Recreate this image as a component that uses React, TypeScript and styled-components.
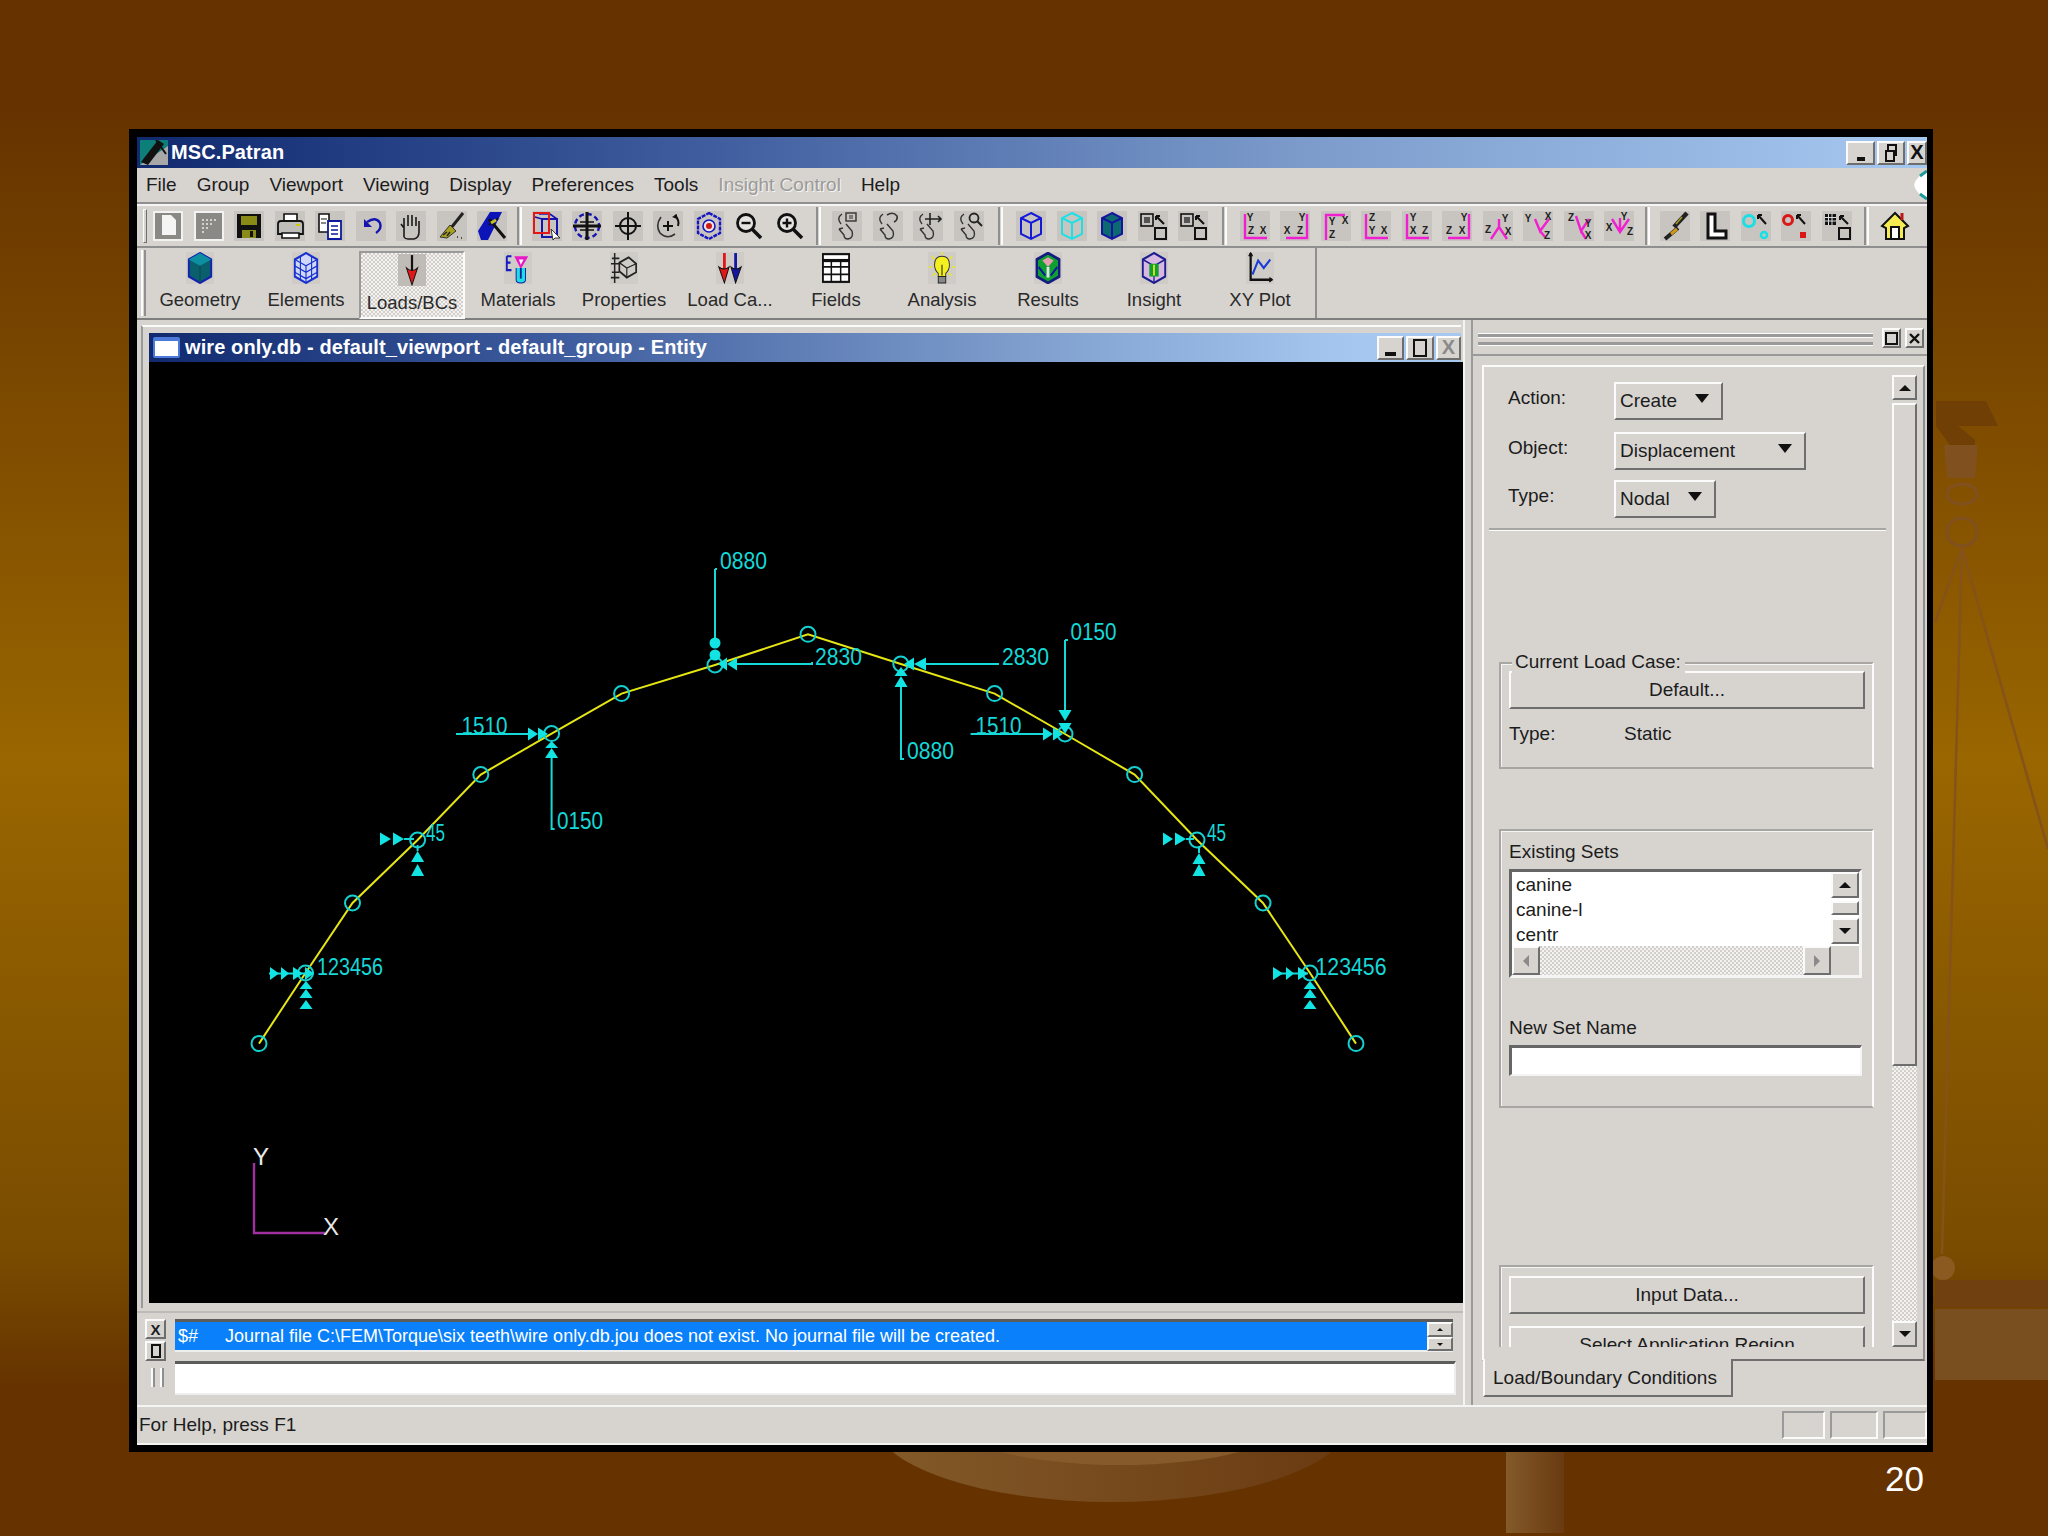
import React from 'react';
import styled, { createGlobalStyle } from 'styled-components';

const GlobalStyle = createGlobalStyle`
    html, body { margin: 0; padding: 0; }
    body { font-family: "Liberation Sans", Arial, sans-serif; color: #1c1c1c; }
`;

const FACE = '#d7d4d0';
const raised = `
    border-top: 2px solid #fbfbfb;
    border-left: 2px solid #fbfbfb;
    border-right: 2px solid #6e6e6e;
    border-bottom: 2px solid #6e6e6e;
    box-sizing: border-box;
    background: ${FACE};
`;
const dither = `repeating-conic-gradient(#f4f3f1 0 25%, #d2cfcb 0 50%) 0 0 / 4px 4px`;

const Page = styled.div`
    position: relative;
    width: 2048px;
    height: 1536px;
    overflow: hidden;
    padding: 129px 0 0 129px;
    box-sizing: border-box;
    background: linear-gradient(180deg, #663300 0, #663300 110px, #996600 760px, #7a4c00 1250px, #663300 1385px);
`;

const Backdrop = styled.svg`
    position: absolute;
    left: 0;
    top: 0;
`;

const Win = styled.div`
    position: relative;
    width: 1804px;
    box-sizing: border-box;
    border-style: solid;
    border-color: #000;
    border-width: 8px 6px 7px 8px;
    background: ${FACE};
    font-size: 19px;
`;

const PageNumber = styled.div`
    position: relative;
    width: 1795px;
    margin-top: 7px;
    text-align: right;
    color: #fff;
    font-size: 35px;
    line-height: 40px;
`;

const TitleBar = styled.div<{ $child?: boolean }>`
    display: flex;
    align-items: center;
    height: ${p => (p.$child ? 31 : 31)}px;
    box-sizing: border-box;
    padding-left: ${p => (p.$child ? 4 : 3)}px;
    background: linear-gradient(90deg, #10296f 0, #3c5a9c 30%, #7c9bcb 65%, #a6c8f0 ${p => (p.$child ? 92 : 100)}%, #a6c8f0 100%);
    color: #fff;
    font-weight: bold;
    font-size: 20px;
`;

const TitleText = styled.span<{ $ml: number }>`
    margin-left: ${p => p.$ml}px;
    flex: 1;
    white-space: nowrap;
    letter-spacing: 0.1px;
`;

const WinButton = styled.div<{ $w: number; $h: number; $dim?: boolean }>`
    ${raised}
    width: ${p => p.$w}px;
    height: ${p => p.$h}px;
    margin-left: 2px;
    display: flex;
    align-items: center;
    justify-content: center;
    overflow: hidden;
    color: ${p => (p.$dim ? '#8a8a8a' : '#111')};
    font-weight: bold;
    font-size: 20px;
    flex: none;
`;

const MenuBar = styled.div`
    position: relative;
    display: flex;
    align-items: center;
    gap: 20px;
    height: 36px;
    box-sizing: border-box;
    padding-left: 9px;
    border-bottom: 2px solid #8f8f8f;
`;

const MenuItem = styled.span<{ $off?: boolean }>`
    color: ${p => (p.$off ? '#9c9a97' : '#1c1c1c')};
    text-shadow: ${p => (p.$off ? '1px 1px 0 #f4f4f4' : 'none')};
    white-space: nowrap;
`;

const MdiCorner = styled.svg`
    margin-left: auto;
    flex: none;
`;

const ToolRow = styled.div`
    display: flex;
    align-items: center;
    height: 44px;
    box-sizing: border-box;
    padding-left: 6px;
    border-top: 2px solid #f4f4f4;
    border-bottom: 2px solid #8f8f8f;
`;

const Grip = styled.div`
    width: 4px;
    height: 34px;
    margin-right: 1px;
    ${raised}
    border-width: 1px;
    flex: none;
`;

const ToolCell = styled.div`
    width: 40.5px;
    height: 38px;
    display: flex;
    align-items: center;
    justify-content: center;
    flex: none;
`;

const ToolSep = styled.div<{ $w: number }>`
    width: ${p => p.$w}px;
    height: 38px;
    flex: none;
    display: flex;
    justify-content: center;
    &::before {
        content: '';
        width: 5px;
        box-sizing: border-box;
        border-left: 2px solid #8f8f8f;
        border-right: 2px solid #fbfbfb;
    }
`;

const BigRow = styled.div`
    display: flex;
    height: 72px;
    box-sizing: border-box;
    padding-left: 4px;
    border-bottom: 2px solid #7e7e7e;
`;

const BigGrip = styled.div`
    width: 5px;
    margin: 2px 1px 2px 0;
    border-left: 2px solid #fbfbfb;
    border-right: 2px solid #8f8f8f;
    box-sizing: border-box;
    flex: none;
`;

const BigBox = styled.div`
    display: flex;
    width: 1170px;
    box-sizing: border-box;
    border-right: 2px solid #8f8f8f;
    flex: none;
`;

const BigButton = styled.div<{ $on?: boolean }>`
    width: 106px;
    flex: none;
    display: flex;
    flex-direction: column;
    align-items: center;
    box-sizing: border-box;
    padding-top: ${p => (p.$on ? 1 : 4)}px;
    color: #2a2a2a;
    font-size: 18.5px;
    white-space: nowrap;
    height: ${p => (p.$on ? 68 : 70)}px;
    margin-top: ${p => (p.$on ? 3 : 0)}px;
    ${p =>
        p.$on
            ? `background: ${dither}; border: 2px solid #9a9a9a; border-right-color: #fbfbfb; border-bottom-color: #fbfbfb;`
            : ''}
`;

const BigLabel = styled.span<{ $on?: boolean }>`
    margin-top: ${p => (p.$on ? 6 : 5)}px;
    line-height: 22px;
`;

const Workspace = styled.div`
    display: flex;
    height: 1085px;
`;

const LeftCol = styled.div`
    width: 1326px;
    flex: none;
    display: flex;
    flex-direction: column;
`;

const ChildFrame = styled.div`
    margin: 5px 2px 0 4px;
    height: 983px;
    box-sizing: border-box;
    padding: 6px 0 5px 6px;
    display: flex;
    flex-direction: column;
    border-top: 2px solid #fbfbfb;
    border-left: 2px solid #9a9a9a;
`;

const Canvas = styled.svg`
    display: block;
    background: #000;
    flex: none;
`;

const CanvasLabel = styled.text`
    fill: #15d8d8;
    font-family: "Liberation Sans", Arial, sans-serif;
    font-size: 23px;
`;

const AxisLetter = styled.text`
    fill: #e8e8e8;
    font-family: "Liberation Sans", Arial, sans-serif;
    font-size: 24px;
`;

const JournalBar = styled.div`
    height: 97px;
    box-sizing: border-box;
    border-top: 2px solid #bdbbb8;
    margin-top: 3px;
    display: flex;
    padding: 6px 7px 0 8px;
    gap: 9px;
`;

const JournalTools = styled.div`
    width: 21px;
    display: flex;
    flex-direction: column;
    gap: 2px;
    flex: none;
`;

const JournalBtn = styled.div`
    ${raised}
    height: 20px;
    display: flex;
    align-items: center;
    justify-content: center;
    font-size: 15px;
    font-weight: bold;
`;

const JournalGrip = styled.div`
    width: 9px;
    height: 19px;
    margin: 5px 0 0 6px;
    border-left: 2px solid #fbfbfb;
    border-right: 2px solid #8f8f8f;
    box-shadow: inset 2px 0 0 #8f8f8f, inset -2px 0 0 #fbfbfb;
`;

const JournalMain = styled.div`
    flex: 1;
    display: flex;
    flex-direction: column;
`;

const JournalLine = styled.div`
    display: flex;
    height: 33px;
    margin-right: 3px;
    background: #0a80fa;
    border-top: 3px solid #5c5c5c;
    border-bottom: 2px solid #eee;
    box-sizing: border-box;
    color: #fff;
    font-size: 18px;
    align-items: center;
    white-space: pre;
`;

const JournalTag = styled.span`
    width: 50px;
    padding-left: 3px;
    box-sizing: border-box;
    flex: none;
`;

const JournalMsg = styled.span`
    flex: 1;
`;

const JournalSpin = styled.div`
    width: 26px;
    flex: none;
    display: flex;
    flex-direction: column;
    height: 100%;
`;

const CommandInput = styled.div`
    height: 34px;
    margin-top: 9px;
    background: #fff;
    box-sizing: border-box;
    border-top: 3px solid #5c5c5c;
    border-bottom: 2px solid #eee;
    border-right: 2px solid #eee;
`;

const PanelShell = styled.div`
    flex: 1;
    padding-left: 6px;
    border-left: 2px solid #f4f4f4;
    display: flex;
`;

const PanelInner = styled.div`
    flex: 1;
    border-left: 2px solid #9a9a9a;
    display: flex;
    flex-direction: column;
`;

const PanelHeader = styled.div`
    display: flex;
    align-items: center;
    height: 36px;
    flex: none;
    box-sizing: border-box;
    padding-left: 5px;
    border-bottom: 2px solid #9a9a9a;
`;

const PanelGrip = styled.div`
    width: 395px;
    height: 11px;
    margin-right: 9px;
    margin-top: 4px;
    box-sizing: border-box;
    border-top: 3px solid #9a9a9a;
    border-bottom: 3px solid #9a9a9a;
    box-shadow: inset 0 1px 0 #fbfbfb, 0 -1px 0 #fbfbfb, 0 1px 0 #fbfbfb;
`;

const PanelBtn = styled.div<{ $ml?: number }>`
    ${raised}
    width: 19px;
    height: 20px;
    margin-left: ${p => p.$ml ?? 0}px;
    margin-top: 2px;
    display: flex;
    align-items: center;
    justify-content: center;
    font-weight: bold;
    font-size: 15px;
`;

const FormFrame = styled.div`
    margin: 9px 2px 0 9px;
    height: 996px;
    flex: none;
    box-sizing: border-box;
    display: flex;
    border-top: 2px solid #fbfbfb;
    border-left: 2px solid #fbfbfb;
    border-right: 2px solid #8f8f8f;
    border-bottom: 2px solid #6e6e6e;
`;

const FormBody = styled.div`
    width: 408px;
    height: 980px;
    overflow: hidden;
    flex: none;
`;

const FieldRow = styled.div<{ $mt: number }>`
    display: flex;
    align-items: center;
    margin-top: ${p => p.$mt}px;
    padding-left: 24px;
`;

const FieldLabel = styled.span`
    width: 106px;
    flex: none;
    margin-bottom: 6px;
`;

const OptionMenu = styled.div<{ $w: number }>`
    ${raised}
    width: ${p => p.$w}px;
    height: 38px;
    display: flex;
    align-items: center;
    justify-content: space-between;
    padding: 0 12px 0 4px;
    line-height: 38px;
`;

const Caret = styled.i<{ $up?: boolean }>`
    width: 0;
    height: 0;
    display: block;
    flex: none;
    margin-bottom: 6px;
    border-left: 7px solid transparent;
    border-right: 7px solid transparent;
    border-top: 9px solid #111;
`;

const Rule = styled.div`
    margin: 10px 6px 0 5px;
    height: 2px;
    background: #a8a6a3;
    box-shadow: 0 1px 0 #fbfbfb;
`;

const Group = styled.div<{ $mt: number; $h: number }>`
    position: relative;
    width: 375px;
    height: ${p => p.$h}px;
    margin: ${p => p.$mt}px 0 0 15px;
    box-sizing: border-box;
    padding: 0 8px;
    border: 2px solid #a8a6a3;
    border-right-color: #fbfbfb;
    border-bottom-color: #a8a6a3;
    box-shadow: inset 1px 1px 0 #f4f4f4;
`;

const Legend = styled.span`
    position: absolute;
    left: 11px;
    top: -13px;
    padding: 0 4px 0 3px;
    background: ${FACE};
    line-height: 22px;
`;

const PushButton = styled.div<{ $mt: number }>`
    ${raised}
    width: 356px;
    height: 38px;
    margin-top: ${p => p.$mt}px;
    text-align: center;
    line-height: 34px;
`;

const StaticRow = styled.div`
    display: flex;
    margin-top: 14px;
    line-height: 22px;
`;

const StaticKey = styled.span`
    width: 115px;
`;

const GroupText = styled.div<{ $mt: number }>`
    margin-top: ${p => p.$mt}px;
    line-height: 22px;
`;

const ListBox = styled.div`
    width: 353px;
    height: 109px;
    margin-top: 6px;
    box-sizing: border-box;
    border-top: 3px solid #666;
    border-left: 3px solid #666;
    border-right: 3px solid #f4f4f4;
    border-bottom: 3px solid #f4f4f4;
    display: grid;
    grid-template-columns: 319px 28px;
    grid-template-rows: 74px 29px;
`;

const ListItems = styled.div`
    background: #fff;
    padding-left: 4px;
    line-height: 25px;
    overflow: hidden;
`;

const ListVScroll = styled.div`
    display: flex;
    flex-direction: column;
    gap: 3px;
    background: #fff;
`;

const ScrollBtn = styled.div<{ $h: number; $w?: number }>`
    ${raised}
    height: ${p => p.$h}px;
    width: ${p => (p.$w ? `${p.$w}px` : 'auto')};
    flex: none;
    display: flex;
    align-items: center;
    justify-content: center;
`;

const ListHScroll = styled.div`
    display: flex;
    justify-content: space-between;
    background: ${dither};
`;

const ArrowGlyph = styled.i<{ $dir: 'up' | 'down' | 'left' | 'right'; $size?: number; $color?: string }>`
    display: block;
    width: 0;
    height: 0;
    ${p => {
        const s = p.$size ?? 6;
        const c = p.$color ?? '#111';
        if (p.$dir === 'up') return `border-left: ${s}px solid transparent; border-right: ${s}px solid transparent; border-bottom: ${s}px solid ${c};`;
        if (p.$dir === 'down') return `border-left: ${s}px solid transparent; border-right: ${s}px solid transparent; border-top: ${s}px solid ${c};`;
        if (p.$dir === 'left') return `border-top: ${s}px solid transparent; border-bottom: ${s}px solid transparent; border-right: ${s}px solid ${c};`;
        return `border-top: ${s}px solid transparent; border-bottom: ${s}px solid transparent; border-left: ${s}px solid ${c};`;
    }}
`;

const TextField = styled.div`
    width: 353px;
    height: 31px;
    margin-top: 6px;
    background: #fff;
    box-sizing: border-box;
    border-top: 3px solid #666;
    border-left: 3px solid #666;
    border-right: 2px solid #f4f4f4;
    border-bottom: 2px solid #f4f4f4;
`;

const FormScroll = styled.div`
    width: 25px;
    margin: 8px 0 0 0;
    flex: none;
    display: flex;
    flex-direction: column;
    height: 972px;
`;

const ScrollThumb = styled.div`
    ${raised}
    height: 663px;
    margin-top: 3px;
    flex: none;
`;

const ScrollTrack = styled.div`
    flex: 1;
    background: ${dither};
`;

const TabRow = styled.div`
    flex: 1;
    padding-left: 10px;
`;

const Tab = styled.div`
    position: relative;
    width: 250px;
    height: 38px;
    margin-top: -2px;
    box-sizing: border-box;
    background: ${FACE};
    border-left: 2px solid #fbfbfb;
    border-right: 2px solid #6e6e6e;
    border-bottom: 2px solid #6e6e6e;
    padding-left: 8px;
    line-height: 38px;
    white-space: nowrap;
`;

const StatusBar = styled.div`
    height: 40px;
    box-sizing: border-box;
    display: flex;
    align-items: center;
    padding-left: 2px;
    border-top: 2px solid #f4f4f4;
    border-bottom: 2px solid #f4f4f4;
`;

const StatusText = styled.span`
    flex: 1;
`;

const StatusPane = styled.div<{ $w: number; $ml: number }>`
    width: ${p => p.$w}px;
    margin-left: ${p => p.$ml}px;
    height: 28px;
    box-sizing: border-box;
    border-top: 2px solid #9a9a9a;
    border-left: 2px solid #9a9a9a;
    border-right: 2px solid #fbfbfb;
    border-bottom: 2px solid #fbfbfb;
    flex: none;
`;

const TileSvg = styled.svg<{ $w: number; $h: number }>`
    width: ${p => p.$w}px;
    height: ${p => p.$h}px;
    display: block;
    flex: none;
`;

const IconText = styled.text`
    font-family: "Liberation Sans", Arial, sans-serif;
    font-size: 10px;
    font-weight: bold;
    fill: #222;
    text-anchor: middle;
`;

const Tile = ({ children, w = 30, h = 30, bg = '#c8c5c1' }: { children?: React.ReactNode; w?: number; h?: number; bg?: string }) => (
    <TileSvg viewBox="0 0 30 30" preserveAspectRatio="none" $w={w} $h={h}>
        <rect width="30" height="30" fill={bg} />
        {children}
    </TileSvg>
);

const Cube = ({ stroke, fill = 'none' }: { stroke: string; fill?: string }) => (
    <g fill={fill} stroke={stroke} strokeWidth="2">
        <path d="M15 2L25 7V23L15 28L5 23V7Z" />
        <path d="M5 7L15 12L25 7M15 12V28" fill="none" />
    </g>
);

const HandShape = () => (
    <path d="M8 26V17L5 13M8 17V7M12 15V4M16 15V4M20 15V6M23 17V10V21Q23 27 18 28H12Q9 28 8 26" fill="none" stroke="#1a1a1a" strokeWidth="1.6" />
);

const Rotate = ({ children }: { children: React.ReactNode }) => (
    <>
        <path d="M7 18L12 24Q12 28 16 28Q22 27 20 20L14 13M7 18L11 17" fill="none" stroke="#333" strokeWidth="1.4" />
        <path d="M9 13Q4 7 10 3" fill="none" stroke="#333" strokeWidth="1.4" />
        {children}
    </>
);

const SmallToBig = ({ c, tiny }: { c: string; tiny?: boolean }) => (
    <>
        <path d="M18 5L26 13M18 5V9M18 5H22" stroke="#111" strokeWidth="2" fill="none" />
        <rect x={tiny ? 19 : 17} y={tiny ? 21 : 17} width={tiny ? 6 : 11} height={tiny ? 6 : 11} fill={tiny ? c : 'none'} stroke={tiny ? c : '#111'} strokeWidth="2" />
    </>
);

const TOOLS: React.ReactNode[][] = [
    [
        <Tile bg="#8b8986"><rect x="1" y="1" width="28" height="28" fill="none" stroke="#f2f2f2" strokeWidth="2" /><path d="M9 4H18L23 9V24H9Z" fill="#f4f4f4" /></Tile>,
        <Tile bg="#8b8986"><rect x="1" y="1" width="28" height="28" fill="none" stroke="#f2f2f2" strokeWidth="2" /><path d="M8 9H22M8 13H18M8 17H14M8 21H10" stroke="#d4d2cf" strokeDasharray="2 2" strokeWidth="2" /></Tile>,
        <Tile><path d="M3 3H27V27H3Z" fill="#111" /><rect x="7" y="5" width="16" height="9" fill="#8a8a16" /><rect x="8" y="19" width="14" height="8" fill="#8a8a16" /><rect x="16" y="20" width="3" height="6" fill="#111" /></Tile>,
        <Tile><path d="M9 3H22V11H9Z" fill="#fff" stroke="#111" strokeWidth="1.6" /><path d="M3 13Q3 10 6 10H25Q28 10 28 13V23H3Z" fill="#bfbdb9" stroke="#111" strokeWidth="1.8" /><path d="M7 22H24V27H7Z" fill="#fff" stroke="#111" strokeWidth="1.6" /><path d="M21 14h4" stroke="#cccc00" strokeWidth="2" /></Tile>,
        <Tile><path d="M4 3H14V21H4Z" fill="#fff" stroke="#111" strokeWidth="1.6" /><path d="M13 10H26V28H13Z" fill="#fff" stroke="#0a1a9a" strokeWidth="1.8" /><path d="M16 15H23M16 19H23M16 23H23" stroke="#0a1a9a" strokeWidth="1.5" /><path d="M6 8H12M6 12H11" stroke="#111" /></Tile>,
        <Tile><path d="M8 8V16H16Z" fill="#1414b0" /><path d="M11 11Q20 5 24 12Q26 18 20 22" fill="none" stroke="#1414b0" strokeWidth="2.4" /></Tile>,
        <Tile><HandShape /></Tile>,
        <Tile><path d="M26 2L14 17" stroke="#222" strokeWidth="3" /><path d="M13 14L19 20L10 27L3 26Z" fill="#a8a020" stroke="#333" /><path d="M6 24L10 21M10 25L13 21M20 26h1M24 27h1" stroke="#222" strokeWidth="1.4" /></Tile>,
        <Tile><path d="M13 1H25L11 29H4L1 20Z" fill="#0c14b8" /><path d="M12 8L28 27" stroke="#111" strokeWidth="3" /><path d="M12 14L22 7" stroke="#111" strokeWidth="2" strokeDasharray="2 1" /><path d="M14 12l5 -3" stroke="#c8c020" strokeWidth="3" /></Tile>,
    ],
    [
        <Tile><path d="M10 8H25V26H10Z" fill="none" stroke="#1414b0" strokeWidth="2" /><path d="M3 6L10 8M25 8L18 3H7" fill="none" stroke="#1414b0" strokeWidth="1.6" /><rect x="2" y="2" width="15" height="20" fill="none" stroke="#e01818" strokeWidth="2" /><path d="M19 18L28 27L23 27L21 29Z" fill="#fff" stroke="#333" /></Tile>,
        <Tile><circle cx="15" cy="15" r="12" fill="none" stroke="#1414b0" strokeWidth="2.4" strokeDasharray="5 3" /><path d="M15 1V29M1 15H29" stroke="#111" strokeWidth="3" /><path d="M8 11H22M8 19H22" stroke="#111" strokeWidth="1.4" /></Tile>,
        <Tile><path d="M15 1V29M2 15H28" stroke="#111" strokeWidth="2" /><circle cx="15" cy="15" r="8" fill="none" stroke="#111" strokeWidth="2" /></Tile>,
        <Tile><path d="M8 6Q2 14 7 22Q14 29 22 23" fill="none" stroke="#333" strokeWidth="1.6" /><path d="M15 10V20M10 15H20" stroke="#111" strokeWidth="2" /><path d="M22 4Q27 10 25 15" stroke="#111" strokeWidth="2" fill="none" /><path d="M19 6L24 3V8Z" fill="#111" /></Tile>,
        <Tile><path d="M15 2L26 8V22L15 28L4 22V8Z" fill="none" stroke="#1414c0" strokeWidth="2.4" strokeDasharray="4 1" /><circle cx="15" cy="15" r="6" fill="#e8e4e4" stroke="#1414c0" strokeWidth="1.6" /><circle cx="15" cy="15" r="3" fill="#d01818" /></Tile>,
        <Tile bg={FACE}><circle cx="12" cy="12" r="8.5" fill="#e6e4e0" stroke="#111" strokeWidth="2.8" /><path d="M7.5 12H16.5" stroke="#111" strokeWidth="2.4" /><path d="M18 18L27 27" stroke="#111" strokeWidth="3.6" /></Tile>,
        <Tile bg={FACE}><circle cx="12" cy="12" r="8.5" fill="#e6e4e0" stroke="#111" strokeWidth="2.8" /><path d="M7.5 12H16.5M12 7.5V16.5" stroke="#111" strokeWidth="2.4" /><path d="M18 18L27 27" stroke="#111" strokeWidth="3.6" /></Tile>,
    ],
    [
        <Tile><Rotate><rect x="14" y="2" width="10" height="8" fill="none" stroke="#333" strokeWidth="1.4" /><path d="M17 5h4M17 7h4" stroke="#333" /></Rotate></Tile>,
        <Tile><Rotate><path d="M14 4Q20 0 24 5Q25 9 21 11" fill="none" stroke="#333" strokeWidth="1.6" /></Rotate></Tile>,
        <Tile><Rotate><path d="M17 2V14M12 8H28M25 5L28 8L25 11" fill="none" stroke="#222" strokeWidth="1.6" /></Rotate></Tile>,
        <Tile><Rotate><circle cx="20" cy="7" r="4.5" fill="none" stroke="#222" strokeWidth="1.8" /><path d="M23 10L28 15" stroke="#222" strokeWidth="2" /></Rotate></Tile>,
    ],
    [
        <Tile><Cube stroke="#1418d8" /></Tile>,
        <Tile><Cube stroke="#1ce0e4" /></Tile>,
        <Tile><Cube stroke="#1414a0" fill="#0a6a70" /></Tile>,
        <Tile><rect x="3" y="3" width="12" height="12" fill="none" stroke="#111" strokeWidth="1.6" /><rect x="6" y="6" width="6" height="6" fill="#555" /><SmallToBig c="#111" /></Tile>,
        <Tile><rect x="3" y="3" width="12" height="12" fill="none" stroke="#111" strokeWidth="1.6" /><rect x="6" y="6" width="6" height="6" fill="#555" /><SmallToBig c="#111" /></Tile>,
    ],
    [
        <Axis d="M5 3V27H27" t={[['Y', 10, 10], ['Z', 11, 23], ['X', 23, 23]]} />,
        <Axis d="M27 3V27H6" t={[['Y', 22, 10], ['X', 7, 23], ['Z', 20, 23]]} />,
        <Axis d="M5 29V4H24" t={[['Y', 11, 14], ['X', 24, 13], ['Z', 11, 27]]} />,
        <Axis d="M5 3V27H27" t={[['Z', 11, 10], ['Y', 11, 23], ['X', 23, 23]]} />,
        <Axis d="M5 3V27H27" t={[['Y', 11, 10], ['X', 11, 23], ['Z', 23, 23]]} />,
        <Axis d="M27 3V27H6" t={[['Y', 22, 10], ['Z', 7, 23], ['X', 20, 23]]} />,
        <Axis d="M16 16L8 28M16 16L24 28M16 16V8" t={[['Z', 5, 22], ['Y', 22, 11], ['X', 25, 24]]} />,
        <Axis d="M12 8L17 20L26 8M17 20L22 26" t={[['Y', 5, 11], ['X', 25, 9], ['Z', 24, 28]]} />,
        <Axis d="M12 5L17 20L25 8M17 20L22 28" t={[['Z', 7, 10], ['Y', 24, 16], ['X', 24, 28]]} />,
        <Axis d="M8 8L16 21L25 8M16 21V7" t={[['X', 5, 20], ['Y', 20, 9], ['Z', 26, 24]]} />,
    ],
    [
        <Tile><path d="M27 2L14 16" stroke="#222" strokeWidth="4.5" /><path d="M16 13L22 6" stroke="#a89a20" strokeWidth="1.5" /><path d="M18 17L5 28" stroke="#222" strokeWidth="4" /><path d="M17 18L11 23" stroke="#d09818" strokeWidth="3" /></Tile>,
        <Tile><path d="M8 3H15V20H26V27H8Z" fill="#fff" stroke="#111" strokeWidth="3" /></Tile>,
        <Tile><circle cx="8" cy="10" r="5.5" fill="none" stroke="#18e0e4" strokeWidth="3" /><path d="M17 4L25 13M17 4V8M17 4H21" stroke="#111" strokeWidth="2" fill="none" /><circle cx="23" cy="24" r="3" fill="none" stroke="#18e0e4" strokeWidth="2.6" /></Tile>,
        <Tile><circle cx="7" cy="9" r="4.5" fill="none" stroke="#d81818" strokeWidth="3" /><path d="M16 4L24 13M16 4V8M16 4H20" stroke="#111" strokeWidth="2" fill="none" /><rect x="19" y="21" width="6" height="6" fill="#d81818" /></Tile>,
        <Tile><path d="M3 3H14V14H3Z" fill="#111" /><path d="M6.5 3V14M10 3V14M3 6.5H14M3 10H14" stroke="#ddd" strokeWidth="1" /><SmallToBig c="#111" /></Tile>,
    ],
    [
        <Tile bg={FACE}><path d="M15 2L2 15L6 17V28H24V17L28 15Z" fill="#f4ec50" stroke="#111" strokeWidth="2" /><rect x="11" y="16" width="8" height="12" fill="#fff" stroke="#111" strokeWidth="2" /><path d="M22 2V9" stroke="#c01818" strokeWidth="3" /></Tile>,
    ],
];

function Axis({ d, t }: { d: string; t: [string, number, number][] }) {
    return (
        <Tile>
            <path d={d} fill="none" stroke="#f020d0" strokeWidth="2.4" />
            {t.map(([s, x, y]) => (
                <IconText key={s} x={x} y={y}>{s}</IconText>
            ))}
        </Tile>
    );
}

const SEP_WIDTHS = [14, 17, 22, 21, 15, 18];

const BIG: { label: string; on?: boolean; icon: React.ReactNode }[] = [
    { label: 'Geometry', icon: <><path d="M15 1L27 7V23L15 29L3 23V7Z" fill="#0a5f6c" stroke="#1420b0" strokeWidth="2" /><path d="M3 7L15 13L27 7L15 1Z" fill="#0c8fa0" /><path d="M15 13V29" stroke="#0a4a50" /></> },
    { label: 'Elements', icon: <><path d="M15 1L27 7V23L15 29L3 23V7Z" fill="#cfd8f4" stroke="#1830d0" strokeWidth="2" /><path d="M3 7L15 13L27 7M15 13V29M9 4V26M21 4V26M3 13L15 19L27 13M3 19L15 25L27 19" fill="none" stroke="#1830d0" strokeWidth="1.2" /></> },
    { label: 'Loads/BCs', on: true, icon: <><path d="M15 1V20" stroke="#111" strokeWidth="2.4" /><path d="M9 13L15 29L21 13Q15 18 9 13Z" fill="#e01818" stroke="#111" /></> },
    { label: 'Materials', icon: <><path d="M3 4V17H8M3 4H8M3 10H7" fill="none" stroke="#1418c0" strokeWidth="2" /><path d="M11 4H26L18 16Z" fill="#e818c8" /><path d="M16 7H21L18 12Z" fill="#fff" /><path d="M13 15V26Q13 29 18 29Q23 29 23 26V15" fill="#18e0e4" stroke="#1418a0" /><path d="M18 15V25" stroke="#1418a0" strokeWidth="2" /></> },
    { label: 'Properties', icon: <><path d="M5 1V29M2 6H10M1 11H10M2 19H10M1 24H10" stroke="#222" strokeWidth="1.6" /><path d="M10 10L20 5L28 11V19L18 24L10 18Z" fill="none" stroke="#222" strokeWidth="1.8" /><path d="M10 10L18 15L28 11M18 15V24" fill="none" stroke="#222" strokeWidth="1.2" /></> },
    { label: 'Load Ca...', icon: <><path d="M9 1V18" stroke="#e01818" strokeWidth="3" /><path d="M3 14L9 29L14 14Q9 18 3 14Z" fill="#e01818" stroke="#111" /><path d="M21 1V18" stroke="#1418a0" strokeWidth="3" /><path d="M16 14L21 29L27 14Q21 18 16 14Z" fill="#1418a0" stroke="#111" /></> },
    { label: 'Fields', icon: <><rect x="1" y="2" width="28" height="26" fill="#fff" stroke="#111" strokeWidth="2" /><path d="M1 8H29" stroke="#111" strokeWidth="3" /><path d="M1 14H29M1 21H29M10 8V28M20 8V28" stroke="#111" strokeWidth="1.6" /></> },
    { label: 'Analysis', icon: <><path d="M15 0V3M4 4L7 7M26 4L23 7M1 14H4M26 14H29M5 22L8 20M25 22L22 20" stroke="#e8e820" strokeWidth="1.6" /><path d="M15 4Q23 4 23 12Q23 17 19 20V23H11V20Q7 17 7 12Q7 4 15 4Z" fill="#f4f020" stroke="#333" /><path d="M11 23H19V29H11Z" fill="#888" stroke="#222" /><path d="M15 12V22" stroke="#111" /></> },
    { label: 'Results', icon: <><path d="M15 1L27 7V23L15 29L3 23V7Z" fill="#10a030" stroke="#141c80" strokeWidth="2.6" /><path d="M9 8L15 14L21 8L15 5Z" fill="#e4a0b0" /><path d="M15 14V24" stroke="#e4e4f0" strokeWidth="3" /><path d="M5 14L12 22M25 14L18 22" stroke="#0818a0" strokeWidth="2" /></> },
    { label: 'Insight', icon: <><path d="M15 1L27 7V23L15 29L3 23V7Z" fill="#d8b8e0" stroke="#1c1c90" strokeWidth="2" /><path d="M3 7L15 13L27 7M15 13V29" fill="none" stroke="#1c1c90" strokeWidth="1.4" /><path d="M10 11L20 11L20 23L10 23Z" fill="#10a030" /><path d="M15 12V22" stroke="#e0e020" strokeWidth="2" /></> },
    { label: 'XY Plot', icon: <><path d="M5 1V26H28" fill="none" stroke="#111" strokeWidth="2.4" /><path d="M3 4L5 1L7 4M25 24L28 26L25 28" fill="none" stroke="#111" strokeWidth="1.4" /><path d="M7 21L13 8L19 15L26 7" fill="none" stroke="#1a3cd8" strokeWidth="2.2" /></> },
];

const NODES = [
    [257, 1043.6], [303.5, 973], [350.5, 903], [415.6, 840], [478.8, 774.6], [549.6, 733.6], [619.6, 693.6], [713, 665], [806, 634.3],
    [898.8, 664], [992.6, 693.6], [1063, 734], [1132.6, 774.6], [1195, 840], [1261, 903], [1308, 973], [1354, 1043.6],
];

const LABELS: [string, number, number, number][] = [
    ['0880', 718, 569, 47], ['2830', 813, 665, 47], ['2830', 1000, 665, 47], ['0880', 905, 759, 47],
    ['1510', 973.5, 734, 46], ['0150', 1068.6, 640, 46], ['1510', 459.6, 734, 46], ['0150', 555, 829, 46],
    ['45', 424, 841, 19], ['123456', 315, 975, 66], ['45', 1205, 841, 19], ['123456', 1313.5, 975, 71],
];

const LEADERS = [
    'M713 569V640M713 569h2', 'M735 664H810V662', 'M922 664H997', 'M899 687V759h3', 'M968.6 734H1041', 'M1063 640V710h0M1063 640h3',
    'M454 734H526', 'M549.6 758V829h3', 'M402 839H412', 'M1184 839H1192', 'M415.6 845V851', 'M1197 846V853', 'M267 973.5H312', 'M1271 973.5H1306',
];

// constraint arrows: [from, to, across, direction]
const ARROWS: [number, number, number, 'r' | 'l' | 'u' | 'd'][] = [
    [268, 277, 973.5, 'r'], [279, 287, 973.5, 'r'], [291, 301, 973.5, 'r'], [303, 312, 973.5, 'r'],
    [989, 981, 304, 'u'], [998, 989, 304, 'u'], [1009, 1000, 304, 'u'],
    [378, 389, 839, 'r'], [391, 402, 839, 'r'], [862, 851, 415.6, 'u'], [876, 864, 415.6, 'u'],
    [526, 536, 734, 'r'], [536, 546, 734, 'r'], [748, 741, 549.6, 'u'], [758, 748, 549.6, 'u'],
    [735, 725, 664, 'l'], [725, 716, 664, 'l'], [924, 912, 664, 'l'], [912, 902, 664, 'l'],
    [676, 667, 899, 'u'], [687, 676, 899, 'u'],
    [1041, 1051, 734, 'r'], [1051, 1061, 734, 'r'], [710, 721, 1063, 'd'], [723, 734, 1063, 'd'],
    [1161, 1171, 839, 'r'], [1173, 1184, 839, 'r'], [864, 853, 1197, 'u'], [876, 864, 1197, 'u'],
    [1271, 1281, 973.5, 'r'], [1284, 1292, 973.5, 'r'], [1296, 1306, 973.5, 'r'],
    [989, 981, 1308, 'u'], [998, 989, 1308, 'u'], [1009, 1000, 1308, 'u'],
];

const arrowPoints = ([a, b, c, dir]: (typeof ARROWS)[number]) => {
    const h = 6.5;
    if (dir === 'r' || dir === 'l') return `${a},${c - h} ${a},${c + h} ${b},${c}`;
    return `${c - h},${a} ${c + h},${a} ${c},${b}`;
};

const MENU = ['File', 'Group', 'Viewport', 'Viewing', 'Display', 'Preferences', 'Tools', 'Insight Control', 'Help'];

export default function App() {
    return (
        <Page>
            <GlobalStyle />
            <Backdrop width="2048" height="1536" viewBox="0 0 2048 1536">
                <defs>
                    <linearGradient id="bowl" x1="0" x2="1">
                        <stop offset="0" stopColor="#835a2a" />
                        <stop offset="1" stopColor="#6a3a10" />
                    </linearGradient>
                </defs>
                <path d="M1936 401H1986L1998 426H1958L1975 440V478H1952V448L1936 426Z" fill="#6f3f06" />
                <path d="M1947 478H1975L1978 445H1944Z" fill="#80501f" />
                <ellipse cx="1962" cy="494" rx="15" ry="10" fill="none" stroke="#80501f" strokeWidth="3" />
                <ellipse cx="1962" cy="532" rx="15" ry="14" fill="none" stroke="#80501f" strokeWidth="3" />
                <path d="M1962 548L2048 849M1962 548L1935 622M1962 548L1942 1254" fill="none" stroke="#85521a" strokeWidth="2.5" />
                <ellipse cx="1943" cy="1268" rx="12" ry="12" fill="#8a5a20" />
                <rect x="1935" y="1280" width="113" height="27" fill="#704010" />
                <rect x="1935" y="1309" width="113" height="71" fill="#7a4f20" />
                <ellipse cx="1112" cy="1420" rx="238" ry="82" fill="url(#bowl)" />
                <ellipse cx="1120" cy="1420" rx="170" ry="45" fill="#875a2c" />
                <rect x="1506" y="1440" width="58" height="93" fill="url(#bowl)" />
            </Backdrop>
            <Win>
                <TitleBar>
                    <svg width="28" height="25" viewBox="0 0 28 25">
                        <rect width="28" height="25" fill="#0c8078" />
                        <path d="M0 25L28 6V25Z" fill="#a8a8a8" />
                        <path d="M1 22L18 0L24 4L8 25Z" fill="#111" />
                        <path d="M16 0L26 14" stroke="#111" strokeWidth="2" />
                    </svg>
                    <TitleText $ml={3}>MSC.Patran</TitleText>
                    <WinButton $w={29} $h={24}>
                        <svg width="14" height="18" viewBox="0 0 14 18"><rect x="3" y="13" width="8" height="4" fill="#111" /></svg>
                    </WinButton>
                    <WinButton $w={28} $h={24}>
                        <svg width="14" height="18" viewBox="0 0 14 18"><rect x="4" y="1" width="8" height="10" fill="none" stroke="#111" strokeWidth="2" /><rect x="2" y="7" width="8" height="10" fill={FACE} stroke="#111" strokeWidth="2" /></svg>
                    </WinButton>
                    <WinButton $w={20} $h={24}>X</WinButton>
                </TitleBar>
                <MenuBar>
                    {MENU.map(m => (
                        <MenuItem key={m} $off={m === 'Insight Control'}>{m}</MenuItem>
                    ))}
                    <MdiCorner width="17" height="30" viewBox="0 0 17 30">
                        <path d="M17 2Q6 6 4 15Q6 24 17 28Z" fill="#fff" />
                        <path d="M17 1L10 6M17 29L10 24" stroke="#1a9a98" strokeWidth="3" />
                    </MdiCorner>
                </MenuBar>
                <ToolRow>
                    <Grip />
                    {TOOLS.map((group, g) => (
                        <React.Fragment key={g}>
                            {group.map((icon, i) => (
                                <ToolCell key={i}>{icon}</ToolCell>
                            ))}
                            {g < TOOLS.length - 1 && <ToolSep $w={SEP_WIDTHS[g]} />}
                        </React.Fragment>
                    ))}
                </ToolRow>
                <BigRow>
                    <BigGrip />
                    <BigBox>
                        {BIG.map(b => (
                            <BigButton key={b.label} $on={b.on}>
                                <Tile w={28} h={32} bg={b.on ? '#bfbcb8' : '#cfccc8'}>{b.icon}</Tile>
                                <BigLabel $on={b.on}>{b.label}</BigLabel>
                            </BigButton>
                        ))}
                    </BigBox>
                </BigRow>
                <Workspace>
                    <LeftCol>
                        <ChildFrame>
                            <TitleBar $child>
                                <svg width="27" height="21" viewBox="0 0 27 21">
                                    <rect width="27" height="21" rx="2" fill="#4c7ad8" />
                                    <rect x="2" y="4" width="23" height="15" fill="#fff" />
                                </svg>
                                <TitleText $ml={5}>wire only.db - default_viewport - default_group - Entity</TitleText>
                                <WinButton $w={27} $h={24}>
                                    <svg width="14" height="18" viewBox="0 0 14 18"><rect x="1" y="13" width="11" height="4" fill="#111" /></svg>
                                </WinButton>
                                <WinButton $w={28} $h={24}>
                                    <svg width="14" height="18" viewBox="0 0 14 18"><rect x="1" y="1" width="12" height="16" fill="none" stroke="#111" strokeWidth="2" /></svg>
                                </WinButton>
                                <WinButton $w={25} $h={24} $dim>X</WinButton>
                            </TitleBar>
                            <Canvas width="1314" height="941" viewBox="147 362 1314 941">
                                <polyline points={NODES.map(n => n.join(',')).join(' ')} fill="none" stroke="#e6e614" strokeWidth="2" />
                                {NODES.map(([x, y]) => (
                                    <circle key={x} cx={x} cy={y} r="7.5" fill="none" stroke="#15d0d0" strokeWidth="2" />
                                ))}
                                {LEADERS.map(d => (
                                    <path key={d} d={d} fill="none" stroke="#15d8d8" strokeWidth="2" />
                                ))}
                                {ARROWS.map((a, i) => (
                                    <polygon key={i} points={arrowPoints(a)} fill="#12e4e4" />
                                ))}
                                <circle cx="713" cy="643" r="5.5" fill="#12e4e4" />
                                <circle cx="713" cy="655" r="5.5" fill="#12e4e4" />
                                {LABELS.map(([t, x, y, w]) => (
                                    <CanvasLabel key={t + x} x={x} y={y} textLength={w} lengthAdjust="spacingAndGlyphs">{t}</CanvasLabel>
                                ))}
                                <path d="M252 1163V1233H323" fill="none" stroke="#a030a0" strokeWidth="2.4" />
                                <AxisLetter x="251" y="1165">Y</AxisLetter>
                                <AxisLetter x="321" y="1235">X</AxisLetter>
                            </Canvas>
                        </ChildFrame>
                        <JournalBar>
                            <JournalTools>
                                <JournalBtn>X</JournalBtn>
                                <JournalBtn>
                                    <svg width="10" height="14" viewBox="0 0 10 14"><rect x="1" y="1" width="8" height="12" fill="none" stroke="#111" strokeWidth="2" /></svg>
                                </JournalBtn>
                                <JournalGrip />
                            </JournalTools>
                            <JournalMain>
                                <JournalLine>
                                    <JournalTag>$#</JournalTag>
                                    <JournalMsg>Journal file C:\FEM\Torque\six teeth\wire only.db.jou does not exist. No journal file will be created.</JournalMsg>
                                    <JournalSpin>
                                        <ScrollBtn $h={15}><ArrowGlyph $dir="up" $size={3} /></ScrollBtn>
                                        <ScrollBtn $h={14}><ArrowGlyph $dir="down" $size={3} /></ScrollBtn>
                                    </JournalSpin>
                                </JournalLine>
                                <CommandInput />
                            </JournalMain>
                        </JournalBar>
                    </LeftCol>
                    <PanelShell>
                        <PanelInner>
                            <PanelHeader>
                                <PanelGrip />
                                <PanelBtn>
                                    <svg width="13" height="13" viewBox="0 0 13 13"><rect x="1" y="1" width="11" height="11" fill="none" stroke="#111" strokeWidth="2" /></svg>
                                </PanelBtn>
                                <PanelBtn $ml={4}>
                                    <svg width="13" height="13" viewBox="0 0 13 13"><path d="M2 2L11 11M11 2L2 11" stroke="#111" strokeWidth="2.4" /></svg>
                                </PanelBtn>
                            </PanelHeader>
                            <FormFrame>
                                <FormBody>
                                    <FieldRow $mt={15}>
                                        <FieldLabel>Action:</FieldLabel>
                                        <OptionMenu $w={109}>Create<Caret /></OptionMenu>
                                    </FieldRow>
                                    <FieldRow $mt={12}>
                                        <FieldLabel>Object:</FieldLabel>
                                        <OptionMenu $w={192}>Displacement<Caret /></OptionMenu>
                                    </FieldRow>
                                    <FieldRow $mt={10}>
                                        <FieldLabel>Type:</FieldLabel>
                                        <OptionMenu $w={102}>Nodal<Caret /></OptionMenu>
                                    </FieldRow>
                                    <Rule />
                                    <Group $mt={132} $h={107}>
                                        <Legend>Current Load Case:</Legend>
                                        <PushButton $mt={7}>Default...</PushButton>
                                        <StaticRow>
                                            <StaticKey>Type:</StaticKey>
                                            <span>Static</span>
                                        </StaticRow>
                                    </Group>
                                    <Group $mt={60} $h={279}>
                                        <GroupText $mt={10}>Existing Sets</GroupText>
                                        <ListBox>
                                            <ListItems>canine<br />canine-l<br />centr</ListItems>
                                            <ListVScroll>
                                                <ScrollBtn $h={26}><ArrowGlyph $dir="up" /></ScrollBtn>
                                                <ScrollBtn $h={14} />
                                                <ScrollBtn $h={26}><ArrowGlyph $dir="down" /></ScrollBtn>
                                            </ListVScroll>
                                            <ListHScroll>
                                                <ScrollBtn $h={29} $w={28}><ArrowGlyph $dir="left" $color="#8a8a8a" /></ScrollBtn>
                                                <ScrollBtn $h={29} $w={28}><ArrowGlyph $dir="right" $color="#8a8a8a" /></ScrollBtn>
                                            </ListHScroll>
                                        </ListBox>
                                        <GroupText $mt={39}>New Set Name</GroupText>
                                        <TextField />
                                    </Group>
                                    <Group $mt={157} $h={140}>
                                        <PushButton $mt={9}>Input Data...</PushButton>
                                        <PushButton $mt={12}>Select Application Region</PushButton>
                                    </Group>
                                </FormBody>
                                <FormScroll>
                                    <ScrollBtn $h={25}><ArrowGlyph $dir="up" /></ScrollBtn>
                                    <ScrollThumb />
                                    <ScrollTrack />
                                    <ScrollBtn $h={26}><ArrowGlyph $dir="down" /></ScrollBtn>
                                </FormScroll>
                            </FormFrame>
                            <TabRow>
                                <Tab>Load/Boundary Conditions</Tab>
                            </TabRow>
                        </PanelInner>
                    </PanelShell>
                </Workspace>
                <StatusBar>
                    <StatusText>For Help, press F1</StatusText>
                    <StatusPane $w={43} $ml={0} />
                    <StatusPane $w={48} $ml={5} />
                    <StatusPane $w={44} $ml={5} />
                </StatusBar>
            </Win>
            <PageNumber>20</PageNumber>
        </Page>
    );
}
